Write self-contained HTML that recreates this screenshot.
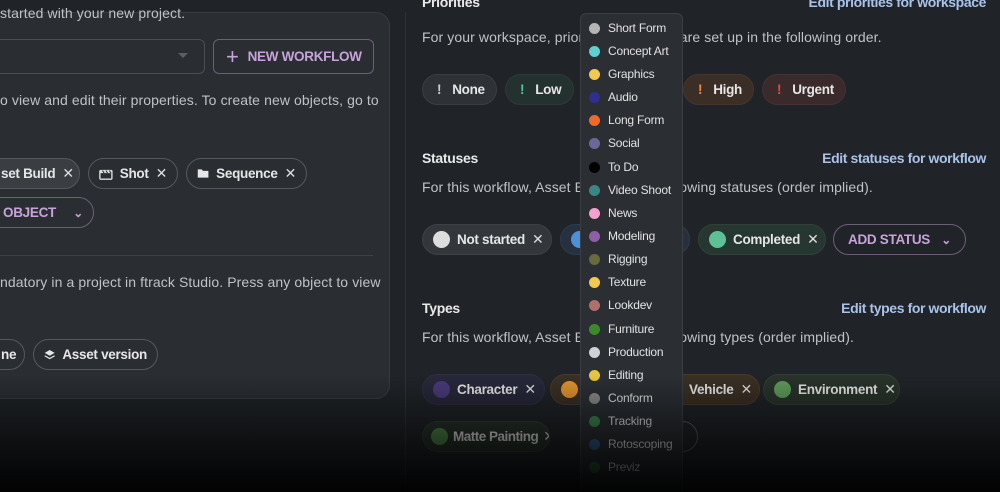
<!DOCTYPE html>
<html><head><meta charset="utf-8"><style>
*{box-sizing:border-box;margin:0;padding:0}
html,body{width:1000px;height:492px;overflow:hidden}
body{background:#202428;font-family:"Liberation Sans",sans-serif;position:relative;color:#c3c6ca}
.a{position:absolute;white-space:nowrap}
.card{position:absolute;left:-20px;top:12px;width:410px;height:387px;background:#2a2e33;border:1px solid #383c41;border-radius:14px}
.t{font-size:14px;color:#bfc2c6;letter-spacing:0.1px}
.h{font-size:14px;color:#e8e8e8;font-weight:bold;letter-spacing:-0.3px}
.lk{font-size:14px;color:#a8c2ea;font-weight:bold;letter-spacing:-0.4px;right:14px}
.chip{position:absolute;height:31px;border-radius:16px;border:1px solid #55595e;display:flex;align-items:center;padding:0 10px;font-size:13.5px;font-weight:bold;color:#e6e6e6;gap:7px;white-space:nowrap;letter-spacing:-0.3px;overflow:hidden}
.x{font-weight:normal;font-size:14px;color:#ddd;margin-left:auto}
.dot{width:17px;height:17px;border-radius:50%;display:inline-block;flex:none}
.pb{border-color:#6d5f78;color:#c6a3d9}
.menu{position:absolute;left:580px;top:13px;width:103px;height:479px;background:#2b2f34;border:1px solid #3b3f44;border-radius:6px 6px 0 0;border-bottom:none}
.mi{position:absolute;font-size:12px;color:#e2e2e2;display:flex;align-items:center;gap:8px;letter-spacing:-0.2px}
.mi i{width:11px;height:11px;border-radius:50%;display:inline-block}
.fade{position:absolute;left:0;top:0;width:1000px;height:492px;background:linear-gradient(to bottom,rgba(0,0,0,0) 0,rgba(0,0,0,0) 375px,rgba(0,0,0,.55) 440px,rgba(0,0,0,.95) 492px);pointer-events:none}
</style></head><body>
<div class="a h" style="left:422px;top:-6px">Priorities</div>
<div class="a lk" style="top:-6px">Edit priorities for workspace</div>
<div class="card"></div>
<div class="a t" style="left:0;top:5px">started with your new project.</div>
<div class="a" style="left:-20px;top:39px;width:225px;height:35px;border:1px solid #4a4e53;border-radius:6px"></div>
<div class="a" style="left:178px;top:53px;border-left:5px solid transparent;border-right:5px solid transparent;border-top:5px solid #5c6065"></div>
<div class="chip pb" style="left:213px;top:39px;width:161px;height:35px;border-radius:6px;padding:0 12px;gap:9px"><span style="font-size:22px;font-weight:normal">+</span>NEW WORKFLOW</div>
<div class="a t" style="left:0;top:92px">o view and edit their properties. To create new objects, go to</div>
<div class="chip" style="left:-20px;top:158px;width:100px;background:#3a3e43;padding-left:20px">set Build<span class="x">✕</span></div>
<div class="chip" style="left:88px;top:158px;width:90px"><svg width="16" height="14" viewBox="0 0 16 14"><rect x="1" y="3" width="14" height="10" rx="1" fill="none" stroke="#ddd" stroke-width="1.6"/><path d="M1 3h14v3H1z" fill="#ddd"/><path d="M4 3l2 3M8 3l2 3M12 3l2 3" stroke="#2a2e33" stroke-width="1.2"/></svg>Shot<span class="x">✕</span></div>
<div class="chip" style="left:186px;top:158px;width:121px"><svg width="16" height="13" viewBox="0 0 16 13"><path d="M1 1h5l2 2h7v9H1z" fill="#e6e6e6"/></svg>Sequence<span class="x">✕</span></div>
<div class="chip pb" style="left:-20px;top:197px;width:114px;padding-left:22px">OBJECT<span style="font-size:12px;margin-left:auto">⌄</span></div>
<div class="a" style="left:0;top:255px;width:373px;height:1px;background:#3d4146"></div>
<div class="a t" style="left:0;top:274px">ndatory in a project in ftrack Studio. Press any object to view</div>
<div class="chip" style="left:-20px;top:339px;width:45px;padding-left:20px">ne</div>
<div class="chip" style="left:33px;top:339px;width:125px"><svg width="16" height="16" viewBox="0 0 16 16"><path d="M8 1l7 4-7 4-7-4z" fill="#e6e6e6"/><path d="M1 9l7 4 7-4" fill="none" stroke="#e6e6e6" stroke-width="1.6"/></svg>Asset version</div>

<div class="a" style="left:405px;top:12px;width:1px;height:480px;background:#2f3338"></div>
<div class="a t" style="left:422px;top:29px">For your workspace, priorities and Kinds are set up in the following order.</div>
<div class="chip" style="left:422px;top:74px;width:75px;background:#2e3237;border-color:#3a3e43"><span style="color:#ccc;margin:0 4px">!</span>None</div>
<div class="chip" style="left:505px;top:74px;width:69px;background:#24322f;border-color:#2c3b37"><span style="color:#55c49b;margin:0 4px">!</span>Low</div>
<div class="chip" style="left:683px;top:74px;width:71px;background:#3a2e26;border-color:#45362b"><span style="color:#ee8a3c;margin:0 4px">!</span>High</div>
<div class="chip" style="left:762px;top:74px;width:84px;background:#3a2a2b;border-color:#463133"><span style="color:#e24c45;margin:0 4px">!</span>Urgent</div>

<div class="a h" style="left:422px;top:150px">Statuses</div>
<div class="a lk" style="top:150px">Edit statuses for workflow</div>
<div class="a t" style="left:422px;top:179px">For this workflow, Asset Build has the following statuses (order implied).</div>
<div class="chip" style="left:422px;top:224px;width:130px;background:#33373c;border-color:#3d4146"><span class="dot" style="background:#ddd"></span>Not started<span class="x">✕</span></div>
<div class="chip" style="left:560px;top:224px;width:130px;background:#253140;border-color:#2e3b4b"><span class="dot" style="background:#4d90d6"></span></div>
<div class="chip" style="left:698px;top:224px;width:128px;background:#263630;border-color:#2f423a"><span class="dot" style="background:#5ec096"></span>Completed<span class="x">✕</span></div>
<div class="chip pb" style="left:833px;top:224px;width:133px;padding:0 14px">ADD STATUS<span style="font-size:12px;margin-left:auto">⌄</span></div>

<div class="a h" style="left:422px;top:300px">Types</div>
<div class="a lk" style="top:300px">Edit types for workflow</div>
<div class="a t" style="left:422px;top:329px">For this workflow, Asset Build has the following types (order implied).</div>
<div class="chip" style="left:422px;top:374px;width:123px;background:#27283a;border-color:#2d2f40"><span class="dot" style="background:#4a3a7a"></span>Character<span class="x">✕</span></div>
<div class="chip" style="left:550px;top:374px;width:210px;background:#3a3024;border-color:#473a2a"><span class="dot" style="background:#e0952f"></span><span style="margin-left:104px">Vehicle</span><span class="x">✕</span></div>
<div class="chip" style="left:763px;top:374px;width:137px;background:#28332a;border-color:#313f33"><span class="dot" style="background:#5e9a5a"></span>Environment<span class="x">✕</span></div>
<div class="chip" style="left:422px;top:421px;width:128px;background:#28332a;border-color:#313f33;padding:0 8px;gap:5px;letter-spacing:-0.5px"><span class="dot" style="background:#4f8a4a"></span>Matte Painting<span class="x">✕</span></div>
<div class="chip" style="left:640px;top:421px;width:58px;border-color:#55595e"></div>

<div class="menu"></div>
<div class="mi" style="left:589px;top:21px"><i style="background:#b5b5b5"></i>Short Form</div>
<div class="mi" style="left:589px;top:44px"><i style="background:#5fcfd0"></i>Concept Art</div>
<div class="mi" style="left:589px;top:67px"><i style="background:#f2c94c"></i>Graphics</div>
<div class="mi" style="left:589px;top:90px"><i style="background:#2f2f8f"></i>Audio</div>
<div class="mi" style="left:589px;top:113px"><i style="background:#ef6a2a"></i>Long Form</div>
<div class="mi" style="left:589px;top:136px"><i style="background:#6b6898"></i>Social</div>
<div class="mi" style="left:589px;top:160px"><i style="background:#000"></i>To Do</div>
<div class="mi" style="left:589px;top:183px"><i style="background:#3a8585"></i>Video Shoot</div>
<div class="mi" style="left:589px;top:206px"><i style="background:#f5a0cf"></i>News</div>
<div class="mi" style="left:589px;top:229px"><i style="background:#8e5fa6"></i>Modeling</div>
<div class="mi" style="left:589px;top:252px"><i style="background:#6a6a3c"></i>Rigging</div>
<div class="mi" style="left:589px;top:275px"><i style="background:#f2c94c"></i>Texture</div>
<div class="mi" style="left:589px;top:298px"><i style="background:#b0706a"></i>Lookdev</div>
<div class="mi" style="left:589px;top:322px"><i style="background:#3a8a2a"></i>Furniture</div>
<div class="mi" style="left:589px;top:345px"><i style="background:#cfd2d6"></i>Production</div>
<div class="mi" style="left:589px;top:368px"><i style="background:#e8c440"></i>Editing</div>
<div class="mi" style="left:589px;top:391px"><i style="background:#8a8a8a"></i>Conform</div>
<div class="mi" style="left:589px;top:414px"><i style="background:#3f8a50"></i>Tracking</div>
<div class="mi" style="left:589px;top:437px"><i style="background:#2f5f8a"></i>Rotoscoping</div>
<div class="mi" style="left:589px;top:460px"><i style="background:#2f6a3a"></i>Previz</div>
<div class="fade"></div>
</body></html>
